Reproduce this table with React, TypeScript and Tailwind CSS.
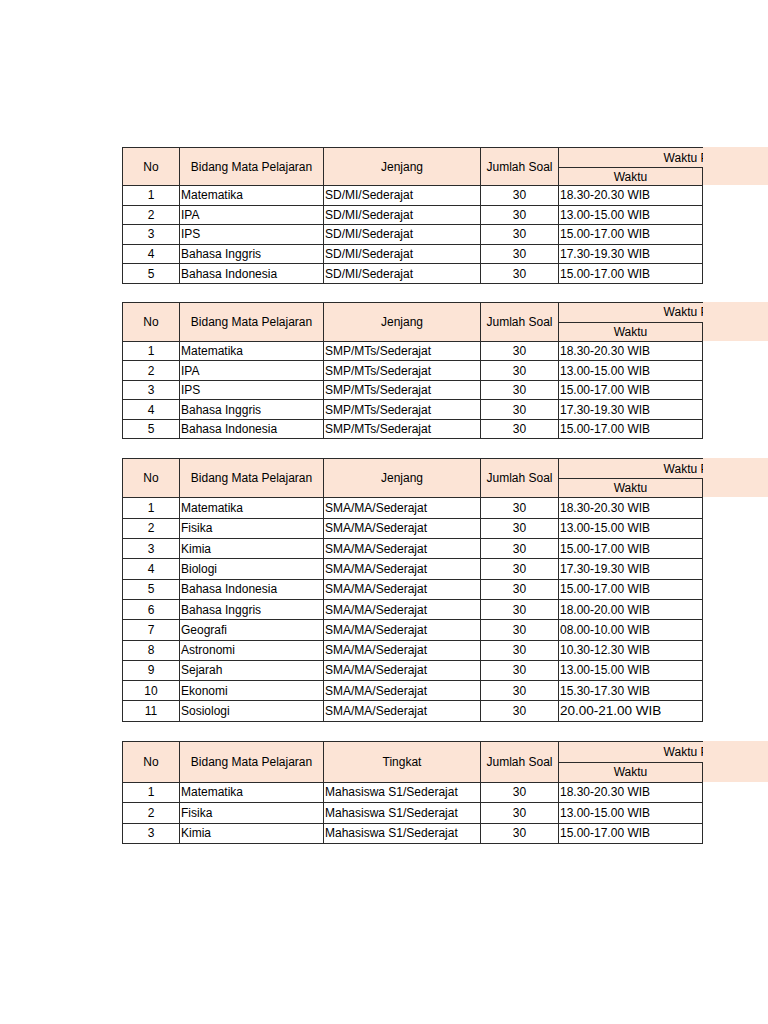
import React from 'react';

type Row = [string, string, string, string];

interface Block {
  levelLabel: string;
  rows: Row[];
  rowH: string;
  headH: string;
  top: string;
  bottom: string;
  gap: string;
  bigLast?: boolean;
}

const BLOCKS: Block[] = [
  {
    levelLabel: 'Jenjang',
    rowH: 'h-[19.6px]',
    headH: 'h-[38px]',
    top: 'h-[20px]',
    bottom: 'h-[18px]',
    gap: 'mt-0',
    rows: [
      ['Matematika', 'SD/MI/Sederajat', '30', '18.30-20.30 WIB'],
      ['IPA', 'SD/MI/Sederajat', '30', '13.00-15.00 WIB'],
      ['IPS', 'SD/MI/Sederajat', '30', '15.00-17.00 WIB'],
      ['Bahasa Inggris', 'SD/MI/Sederajat', '30', '17.30-19.30 WIB'],
      ['Bahasa Indonesia', 'SD/MI/Sederajat', '30', '15.00-17.00 WIB'],
    ],
  },
  {
    levelLabel: 'Jenjang',
    rowH: 'h-[19.5px]',
    headH: 'h-[39px]',
    top: 'h-[20px]',
    bottom: 'h-[19px]',
    gap: 'mt-[18px]',
    rows: [
      ['Matematika', 'SMP/MTs/Sederajat', '30', '18.30-20.30 WIB'],
      ['IPA', 'SMP/MTs/Sederajat', '30', '13.00-15.00 WIB'],
      ['IPS', 'SMP/MTs/Sederajat', '30', '15.00-17.00 WIB'],
      ['Bahasa Inggris', 'SMP/MTs/Sederajat', '30', '17.30-19.30 WIB'],
      ['Bahasa Indonesia', 'SMP/MTs/Sederajat', '30', '15.00-17.00 WIB'],
    ],
  },
  {
    levelLabel: 'Jenjang',
    rowH: 'h-[20.3px]',
    headH: 'h-[39px]',
    top: 'h-[20px]',
    bottom: 'h-[19px]',
    gap: 'mt-[19px]',
    bigLast: true,
    rows: [
      ['Matematika', 'SMA/MA/Sederajat', '30', '18.30-20.30 WIB'],
      ['Fisika', 'SMA/MA/Sederajat', '30', '13.00-15.00 WIB'],
      ['Kimia', 'SMA/MA/Sederajat', '30', '15.00-17.00 WIB'],
      ['Biologi', 'SMA/MA/Sederajat', '30', '17.30-19.30 WIB'],
      ['Bahasa Indonesia', 'SMA/MA/Sederajat', '30', '15.00-17.00 WIB'],
      ['Bahasa Inggris', 'SMA/MA/Sederajat', '30', '18.00-20.00 WIB'],
      ['Geografi', 'SMA/MA/Sederajat', '30', '08.00-10.00 WIB'],
      ['Astronomi', 'SMA/MA/Sederajat', '30', '10.30-12.30 WIB'],
      ['Sejarah', 'SMA/MA/Sederajat', '30', '13.00-15.00 WIB'],
      ['Ekonomi', 'SMA/MA/Sederajat', '30', '15.30-17.30 WIB'],
      ['Sosiologi', 'SMA/MA/Sederajat', '30', '20.00-21.00 WIB'],
    ],
  },
  {
    levelLabel: 'Tingkat',
    rowH: 'h-[20.5px]',
    headH: 'h-[41px]',
    top: 'h-[21px]',
    bottom: 'h-[20px]',
    gap: 'mt-[19px]',
    rows: [
      ['Matematika', 'Mahasiswa S1/Sederajat', '30', '18.30-20.30 WIB'],
      ['Fisika', 'Mahasiswa S1/Sederajat', '30', '13.00-15.00 WIB'],
      ['Kimia', 'Mahasiswa S1/Sederajat', '30', '15.00-17.00 WIB'],
    ],
  },
];

const cell = 'border border-[#2b2b2b] p-0 text-[12px] leading-none text-black';
const peach = 'bg-[#fce4d6]';

function JadwalTable({ block }: { block: Block }) {
  return (
    <div className={`flex items-start ${block.gap}`}>
      <table className="table-fixed border-collapse w-[581px]">
        <colgroup>
          <col className="w-[57px]" />
          <col className="w-[144px]" />
          <col className="w-[157px]" />
          <col className="w-[78px]" />
          <col className="w-[144px]" />
        </colgroup>
        <thead>
          <tr className={block.top}>
            <th rowSpan={2} className={`${cell} ${peach} font-normal text-center`}>No</th>
            <th rowSpan={2} className={`${cell} ${peach} font-normal text-center`}>Bidang Mata Pelajaran</th>
            <th rowSpan={2} className={`${cell} ${peach} font-normal text-center`}>{block.levelLabel}</th>
            <th rowSpan={2} className={`${cell} ${peach} font-normal text-center`}>Jumlah Soal</th>
            <th className={`${cell} ${peach} font-normal border-r-0`}>
              {/* merged header runs past the print edge, so its text is clipped */}
              <div className="flex justify-end overflow-hidden">
                <span className="-mr-[6px] whitespace-nowrap">Waktu P</span>
              </div>
            </th>
          </tr>
          <tr className={block.bottom}>
            <th className={`${cell} ${peach} font-normal text-center`}>Waktu</th>
          </tr>
        </thead>
        <tbody>
          {block.rows.map((r, i) => {
            const big = block.bigLast && i === block.rows.length - 1;
            return (
              <tr key={i} className={block.rowH}>
                <td className={`${cell} text-center`}>{i + 1}</td>
                <td className={`${cell} pl-[1px] whitespace-nowrap overflow-hidden`}>{r[0]}</td>
                <td className={`${cell} pl-[1px] whitespace-nowrap overflow-hidden`}>{r[1]}</td>
                <td className={`${cell} text-center`}>{r[2]}</td>
                <td className={`${cell} pl-[1px] whitespace-nowrap ${big ? 'text-[13.5px]' : ''}`}>{r[3]}</td>
              </tr>
            );
          })}
        </tbody>
      </table>
      <div className={`${peach} w-[66px] shrink-0 ${block.headH}`} />
    </div>
  );
}

export default function App() {
  return (
    <div className="w-[768px] h-[1024px] bg-white font-['Liberation_Sans',Arial,sans-serif] pt-[147px] pl-[122px] overflow-hidden">
      <div className="flex flex-col">
        {BLOCKS.map((b, i) => (
          <JadwalTable key={i} block={b} />
        ))}
      </div>
    </div>
  );
}
